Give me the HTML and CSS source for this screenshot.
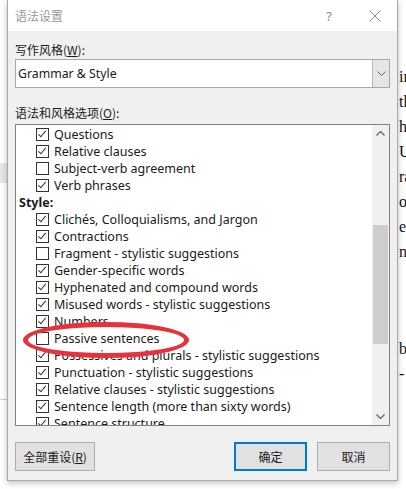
FILE: index.html
```html
<!DOCTYPE html>
<html lang="zh-CN">

<head>
    <meta charset="utf-8" />
    <title>语法设置</title>
    <link rel="stylesheet" href="styles.css">
</head>

<body>
    <div class="desk">
        <div class="left-strip">
            <div class="band"></div>
            <div class="rule"></div>
        </div>

        <div class="dialog">
            <div class="title-bar">
                <span class="title">语法设置</span>
                <span class="help">?</span>
                <svg class="close" width="12" height="12" viewBox="0 0 12 12">
                    <path d="M0.5 0.5 L11.5 11.5 M11.5 0.5 L0.5 11.5" stroke="#8a8a8a" stroke-width="1" fill="none" />
                </svg>
            </div>

            <div class="dialog-body">
                <div class="label first">写作风格(<u>W</u>):</div>
                <div class="combo">
                    <span class="combo-value">Grammar &amp; Style</span>
                    <span class="combo-btn">
                        <svg width="9" height="5" viewBox="0 0 9 5">
                            <path d="M0.5 0.5 L4.5 4.5 L8.5 0.5" stroke="#606060" stroke-width="1" fill="none" />
                        </svg>
                    </span>
                </div>

                <div class="label second">语法和风格选项(<u>O</u>):</div>
                <div class="list">
                    <div class="rows">
                        <div class="row"><span class="box on"></span>Questions</div>
                        <div class="row"><span class="box on"></span>Relative clauses</div>
                        <div class="row"><span class="box"></span>Subject-verb agreement</div>
                        <div class="row"><span class="box on"></span>Verb phrases</div>
                        <div class="group">Style:</div>
                        <div class="row"><span class="box on"></span>Clichés, Colloquialisms, and Jargon</div>
                        <div class="row"><span class="box on"></span>Contractions</div>
                        <div class="row"><span class="box"></span>Fragment - stylistic suggestions</div>
                        <div class="row"><span class="box on"></span>Gender-specific words</div>
                        <div class="row"><span class="box on"></span>Hyphenated and compound words</div>
                        <div class="row"><span class="box on"></span>Misused words - stylistic suggestions</div>
                        <div class="row"><span class="box on"></span>Numbers</div>
                        <div class="row"><span class="box"></span>Passive sentences</div>
                        <div class="row"><span class="box on"></span>Possessives and plurals - stylistic suggestions</div>
                        <div class="row"><span class="box on"></span>Punctuation - stylistic suggestions</div>
                        <div class="row"><span class="box on"></span>Relative clauses - stylistic suggestions</div>
                        <div class="row"><span class="box on"></span>Sentence length (more than sixty words)</div>
                        <div class="row"><span class="box on"></span>Sentence structure</div>
                    </div>
                    <div class="scrollbar">
                        <span class="arrow">
                            <svg width="9" height="5" viewBox="0 0 9 5">
                                <path d="M0.5 4.5 L4.5 0.5 L8.5 4.5" stroke="#606060" stroke-width="1.2" fill="none" />
                            </svg>
                        </span>
                        <div class="track">
                            <div class="thumb"></div>
                        </div>
                        <span class="arrow">
                            <svg width="9" height="5" viewBox="0 0 9 5">
                                <path d="M0.5 0.5 L4.5 4.5 L8.5 0.5" stroke="#606060" stroke-width="1.2" fill="none" />
                            </svg>
                        </span>
                    </div>
                    <div class="mark"></div>
                </div>

                <div class="buttons">
                    <button class="btn">全部重设(<u>R</u>)</button>
                    <span class="spacer"></span>
                    <button class="btn default">确定</button>
                    <button class="btn">取消</button>
                </div>
            </div>
        </div>

        <div class="doc">
            <div class="doc-line top">in</div>
            <div class="doc-line">th</div>
            <div class="doc-line">he</div>
            <div class="doc-line">U</div>
            <div class="doc-line">ra</div>
            <div class="doc-line">or</div>
            <div class="doc-line">ea</div>
            <div class="doc-line">n</div>
            <div class="doc-line gap">b</div>
            <div class="doc-line">-</div>
        </div>
    </div>
</body>

</html>
```
FILE: styles.css
```css
body {
    margin: 0;
    background-color: white;
    font-family: "Noto Sans", "Noto Sans CJK SC", sans-serif;
    color: #1a1a1a;
}

.desk {
    display: flex;
    width: 406px;
    height: 489px;
    overflow: hidden;
}

.left-strip {
    width: 7px;
    flex-shrink: 0;
    display: flex;
    flex-direction: column;
}

.band {
    margin-top: 163px;
    height: 20px;
    background-color: #e6e6e6;
}

.rule {
    margin-top: 216px;
    height: 1px;
    background-color: #cfcfcf;
}

.dialog {
    position: relative;
    z-index: 1;
    width: 389px;
    height: 480px;
    flex-shrink: 0;
    border: 1px solid #a9a9a9;
    border-top: none;
    background-color: #f0f0f0;
    box-shadow: 0 2px 6px rgba(0, 0, 0, 0.25);
    display: flex;
    flex-direction: column;
}

.title-bar {
    height: 32px;
    background-color: white;
    display: flex;
    align-items: center;
    padding-left: 7px;
}

.title {
    font-family: "Noto Sans CJK SC", sans-serif;
    font-size: 12px;
    color: #9a9a9a;
    flex: 1;
}

.help {
    font-family: "Noto Sans", sans-serif;
    font-size: 13px;
    color: #8a8a8a;
    margin-right: 37px;
}

.close {
    margin-right: 16px;
}

.dialog-body {
    padding: 0 7px 9px 7px;
    display: flex;
    flex-direction: column;
}

.label {
    font-family: "Noto Sans CJK SC", sans-serif;
    font-size: 12px;
    line-height: 17px;
    color: #1a1a1a;
}

.label.first {
    margin-top: 10px;
    margin-bottom: 1px;
}

.label.second {
    margin-top: 16px;
    margin-bottom: 3px;
}

.combo {
    height: 27px;
    border: 1px solid #a8a8a8;
    background-color: white;
    display: flex;
    align-items: center;
}

.combo-value {
    flex: 1;
    padding-left: 2px;
    font-size: 12.3px;
}

.combo-btn {
    width: 16px;
    height: 27px;
    border-left: 1px solid #b8b8b8;
    background-color: #e5e5e5;
    display: flex;
    align-items: center;
    justify-content: center;
}

.list {
    position: relative;
    height: 300px;
    border: 1px solid #828282;
    background-color: white;
    display: flex;
    overflow: hidden;
}

.rows {
    flex: 1;
    overflow: hidden;
    padding-top: 1px;
}

.row {
    height: 17px;
    display: flex;
    align-items: center;
    padding-left: 20px;
    font-size: 12.5px;
    white-space: nowrap;
}

.group {
    height: 17px;
    line-height: 17px;
    padding-left: 3px;
    font-size: 12.5px;
    font-weight: bold;
}

.box {
    position: relative;
    width: 11px;
    height: 11px;
    border: 1px solid #333;
    background-color: white;
    margin-right: 5px;
    flex-shrink: 0;
}

.box.on::after {
    content: "";
    position: absolute;
    left: 3px;
    top: 0px;
    width: 3px;
    height: 7px;
    border-right: 1px solid #333;
    border-bottom: 1px solid #333;
    transform: rotate(40deg);
}

.scrollbar {
    width: 17px;
    background-color: #f0f0f0;
    display: flex;
    flex-direction: column;
}

.arrow {
    height: 17px;
    display: flex;
    align-items: center;
    justify-content: center;
}

.track {
    flex: 1;
    padding-top: 83px;
}

.thumb {
    height: 119px;
    margin: 0 1px;
    background-color: #cdcdcd;
}

.mark {
    position: absolute;
    left: 7px;
    top: 197px;
    width: 156px;
    height: 26px;
    border: 5px solid #e8323b;
    border-radius: 50%;
}

.buttons {
    margin-top: 16px;
    display: flex;
    gap: 10px;
}

.spacer {
    flex: 1;
}

.btn {
    height: 29px;
    width: 80px;
    border: 1px solid #adadad;
    background-color: #e1e1e1;
    font-family: "Noto Sans CJK SC", sans-serif;
    font-size: 12px;
    color: #1a1a1a;
    padding: 0;
}

.btn.default {
    width: 73px;
    border: 2px solid #0078d7;
}

.btn:last-child {
    width: 73px;
}

.doc {
    flex: 1;
    padding-left: 1px;
    font-family: "Liberation Serif", serif;
    font-size: 16px;
    line-height: 25px;
    color: #111;
    white-space: nowrap;
}

.doc-line.top {
    margin-top: 64px;
}

.doc-line.gap {
    margin-top: 72px;
}
```
